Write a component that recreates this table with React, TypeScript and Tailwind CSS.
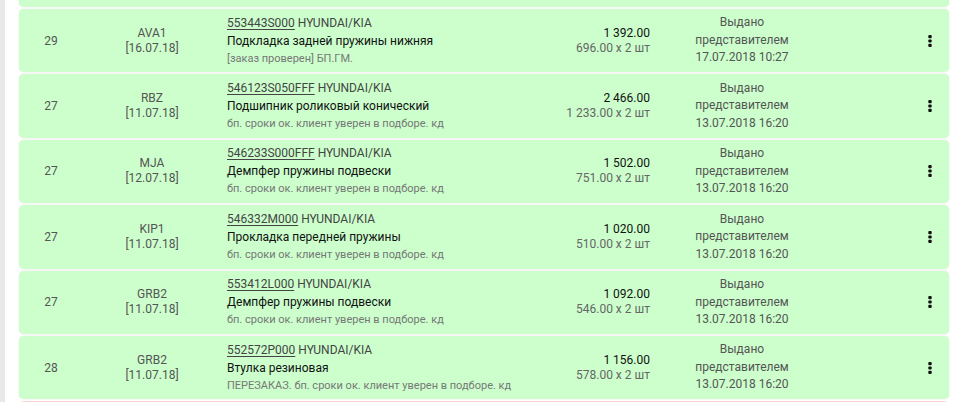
import React from "react";

interface OrderRow {
  qty: string;
  supplier: string;
  date: string;
  code: string;
  brand: string;
  name: string;
  note: string;
  total: string;
  unit: string;
  statusDate: string;
}

const rows: OrderRow[] = [
  { qty: "29", supplier: "AVA1", date: "[16.07.18]", code: "553443S000", brand: "HYUNDAI/KIA", name: "Подкладка задней пружины нижняя", note: "[заказ проверен] БП.ГМ.", total: "1 392.00", unit: "696.00 x 2 шт", statusDate: "17.07.2018 10:27" },
  { qty: "27", supplier: "RBZ", date: "[11.07.18]", code: "546123S050FFF", brand: "HYUNDAI/KIA", name: "Подшипник роликовый конический", note: "бп. сроки ок. клиент уверен в подборе. кд", total: "2 466.00", unit: "1 233.00 x 2 шт", statusDate: "13.07.2018 16:20" },
  { qty: "27", supplier: "MJA", date: "[12.07.18]", code: "546233S000FFF", brand: "HYUNDAI/KIA", name: "Демпфер пружины подвески", note: "бп. сроки ок. клиент уверен в подборе. кд", total: "1 502.00", unit: "751.00 x 2 шт", statusDate: "13.07.2018 16:20" },
  { qty: "27", supplier: "KIP1", date: "[11.07.18]", code: "546332M000", brand: "HYUNDAI/KIA", name: "Прокладка передней пружины", note: "бп. сроки ок. клиент уверен в подборе. кд", total: "1 020.00", unit: "510.00 x 2 шт", statusDate: "13.07.2018 16:20" },
  { qty: "27", supplier: "GRB2", date: "[11.07.18]", code: "553412L000", brand: "HYUNDAI/KIA", name: "Демпфер пружины подвески", note: "бп. сроки ок. клиент уверен в подборе. кд", total: "1 092.00", unit: "546.00 x 2 шт", statusDate: "13.07.2018 16:20" },
  { qty: "28", supplier: "GRB2", date: "[11.07.18]", code: "552572P000", brand: "HYUNDAI/KIA", name: "Втулка резиновая", note: "ПЕРЕЗАКАЗ. бп. сроки ок. клиент уверен в подборе. кд", total: "1 156.00", unit: "578.00 x 2 шт", statusDate: "13.07.2018 16:20" },
];

function MoreDots() {
  return (
    <svg width="4" height="12" viewBox="0 0 4 12" className="text-[#111]">
      <rect x="0.3" y="0" width="3.4" height="3.2" rx="1" fill="currentColor" />
      <rect x="0.3" y="4.4" width="3.4" height="3.2" rx="1" fill="currentColor" />
      <rect x="0.3" y="8.8" width="3.4" height="3.2" rx="1" fill="currentColor" />
    </svg>
  );
}

function Row({ row }: { row: OrderRow }) {
  return (
    <div className="flex h-[63.4px] shrink-0 items-center rounded-[5px] bg-[#ccffcc] shadow-[0_0_2px_rgba(0,0,0,0.12)]">
      {/* qty */}
      <div className="w-[64px] text-center text-[12px] text-[#555]">{row.qty}</div>
      {/* supplier */}
      <div className="w-[138px] text-center text-[12px] leading-[15px] text-[#555]">
        <div>{row.supplier}</div>
        <div>{row.date}</div>
      </div>
      {/* item */}
      <div className="ml-[6px] w-[300px] leading-[18px]">
        <div className="text-[12px] text-[#444]">
          <span className="underline underline-offset-2">{row.code}</span> {row.brand}
        </div>
        <div className="text-[12px] text-[#111]">{row.name}</div>
        <div className="whitespace-nowrap text-[11px] text-[#777]">{row.note}</div>
      </div>
      {/* price */}
      <div className="w-[123px] text-right leading-[15px]">
        <div className="text-[12px] text-[#111]">{row.total}</div>
        <div className="text-[12px] text-[#666]">{row.unit}</div>
      </div>
      {/* status */}
      <div className="w-[184px] text-center text-[12px] leading-[17.5px] text-[#555]">
        <div>Выдано</div>
        <div>представителем</div>
        <div>{row.statusDate}</div>
      </div>
      <div className="flex flex-1 justify-end pr-[17px]">
        <MoreDots />
      </div>
    </div>
  );
}

export default function App() {
  return (
    <div className="flex h-[402px] w-[960px] overflow-hidden bg-white font-['Roboto',sans-serif]">
      <div className="w-[5px] shrink-0 bg-[#e8e8e8]" />
      <div className="ml-[14px] flex w-[930px] flex-col gap-[2px]">
        <div className="h-[7px] shrink-0 rounded-b-[5px] bg-[#ccffcc] shadow-[0_0_2px_rgba(0,0,0,0.12)]" />
        {rows.map((r, i) => (
          <Row key={i} row={r} />
        ))}
        <div className="h-[40px] shrink-0 rounded-[5px] bg-[#ffd6d6]" />
      </div>
    </div>
  );
}
